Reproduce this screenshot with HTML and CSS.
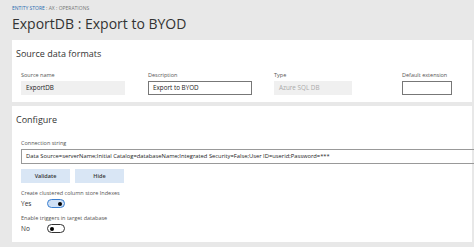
FILE: index.html
```html
<!DOCTYPE html>
<html lang="en">
<head>
    <meta charset="UTF-8">
    <title>ExportDB : Export to BYOD</title>
    <link rel="stylesheet" href="styles.css">
</head>
<body>

    <!-- Header -->
    <div class="header">
        <div class="breadcrumb"><span class="crumb-link">ENTITY STORE</span> : AX : OPERATIONS</div>
        <h1>ExportDB : Export to BYOD</h1>
    </div>

    <!-- Source data formats -->
    <div class="card">
        <h2>Source data formats</h2>
        <div class="fields">
            <div class="field">
                <label>Source name</label>
                <div class="input readonly w-104">ExportDB</div>
            </div>
            <div class="field">
                <label>Description</label>
                <div class="input boxed w-104">Export to BYOD</div>
            </div>
            <div class="field">
                <label>Type</label>
                <div class="input readonly muted w-78">Azure SQL DB</div>
            </div>
            <div class="field">
                <label>Default extension</label>
                <div class="input boxed w-50"></div>
            </div>
        </div>
    </div>

    <!-- Configure -->
    <div class="card card-config">
        <h2>Configure</h2>
        <div class="body">
            <label>Connection string</label>
            <div class="input conn">Data Source=serverName;Initial Catalog=databaseName;Integrated Security=False;User ID=userid;Password=***</div>

            <div class="buttons">
                <button>Validate</button>
                <button>Hide</button>
            </div>

            <label>Create clustered column store Indexes</label>
            <div class="toggle-row">
                <span class="toggle-text">Yes</span>
                <span class="toggle on"><span class="dot"></span></span>
            </div>

            <label>Enable triggers in target database</label>
            <div class="toggle-row">
                <span class="toggle-text">No</span>
                <span class="toggle"><span class="dot"></span></span>
            </div>
        </div>
    </div>

</body>
</html>
```

FILE: styles.css
```css
body {
    margin: 0;
    padding: 0;
    background-color: #e8e8e8;
    font-family: "Open Sans", "Noto Sans", sans-serif;
    color: #222;
    width: 474px;
    height: 247px;
    overflow: hidden;
}

/* Header */
.header {
    padding: 5px 0 0 12px;
    height: 35px;
    box-sizing: border-box;
}

.breadcrumb {
    font-size: 5px;
    line-height: 6px;
    color: #777;
}

.crumb-link {
    color: #2b6cb0;
}

h1 {
    margin: 3px 0 0 0;
    font-size: 14px;
    font-weight: normal;
    line-height: 20px;
    color: #333;
}

/* Cards */
.card {
    background-color: #fff;
    margin: 5px 2px 0 12px;
    height: 62px;
    box-sizing: border-box;
    padding: 7px 0 0 4px;
}

.card-config {
    margin-top: 4px;
    height: 136px;
}

h2 {
    margin: 0;
    font-size: 9px;
    font-weight: normal;
    line-height: 13px;
    color: #333;
}

label {
    display: block;
    font-size: 5.5px;
    line-height: 6px;
    color: #555;
}

.fields {
    display: grid;
    grid-template-columns: 127px 126px 128px 60px;
    padding: 12px 0 0 5px;
}

.field label {
    margin-bottom: 3px;
}

.input {
    box-sizing: border-box;
    height: 14px;
    font-size: 6.3px;
    line-height: 12px;
    padding: 0 4px;
    color: #222;
    white-space: nowrap;
}

.readonly {
    background-color: #f0f0f0;
    border: 1px solid #f0f0f0;
}

.muted {
    color: #aaa;
}

.boxed {
    border: 1px solid #777;
}

.w-104 { width: 104px; }
.w-78 { width: 78px; }
.w-50 { width: 50px; }

/* Configure */
.body {
    padding: 14px 0 0 5px;
}

.conn {
    margin-top: 3px;
    height: 15px;
    line-height: 13px;
    font-size: 5.8px;
    border: 1px solid #999;
    border-right: none;
    margin-right: -4px;
}

.buttons {
    display: flex;
    gap: 5px;
    margin: 5px 0 7px 0;
}

button {
    width: 49px;
    height: 14px;
    border: none;
    padding: 0;
    background-color: #d9e6f5;
    color: #333;
    font-family: inherit;
    font-size: 5.5px;
    font-weight: 600;
}

.toggle-row {
    display: flex;
    align-items: center;
    height: 11px;
    margin: 2px 0 6px 0;
}

.toggle-text {
    width: 26px;
    font-size: 6.5px;
    color: #333;
}

.toggle {
    box-sizing: border-box;
    width: 18px;
    height: 9px;
    border: 1px solid #333;
    border-radius: 5px;
    background-color: #fff;
    display: flex;
    align-items: center;
    padding: 0 2px;
}

.toggle.on {
    background-color: #cfe0f5;
    border-color: #3a7fd0;
    justify-content: flex-end;
}

.dot {
    width: 4px;
    height: 4px;
    border-radius: 50%;
    background-color: #000;
}
```
